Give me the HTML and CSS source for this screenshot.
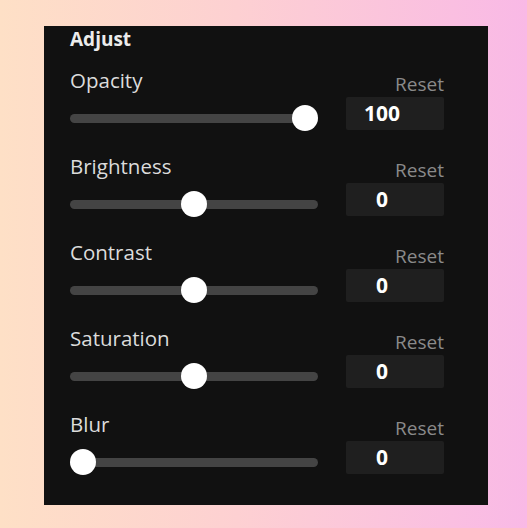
FILE: index.html
```html
<!DOCTYPE html>
<html lang="en">
<head>
<meta charset="utf-8">
<title>Adjust</title>
<link rel="stylesheet" href="styles.css">
</head>
<body>
<div class="panel">
  <div class="title">Adjust</div>
  <div class="rows">
    <div class="row">
      <div class="label">Opacity</div>
      <div class="reset">Reset</div>
      <input class="slider" type="range" min="0" max="100" value="100">
      <div class="value">100</div>
    </div>
    <div class="row">
      <div class="label">Brightness</div>
      <div class="reset">Reset</div>
      <input class="slider" type="range" min="-100" max="100" value="0">
      <div class="value">0</div>
    </div>
    <div class="row">
      <div class="label">Contrast</div>
      <div class="reset">Reset</div>
      <input class="slider" type="range" min="-100" max="100" value="0">
      <div class="value">0</div>
    </div>
    <div class="row">
      <div class="label">Saturation</div>
      <div class="reset">Reset</div>
      <input class="slider" type="range" min="-100" max="100" value="0">
      <div class="value">0</div>
    </div>
    <div class="row">
      <div class="label">Blur</div>
      <div class="reset">Reset</div>
      <input class="slider" type="range" min="0" max="100" value="0">
      <div class="value">0</div>
    </div>
  </div>
</div>
</body>
</html>
```
FILE: styles.css
```css
html, body {
  margin: 0;
  padding: 0;
}
body {
  width: 527px;
  height: 528px;
  background: linear-gradient(to right, #fee0c6 0%, #fdd0d2 45%, #f9b9e6 100%);
  font-family: "Open Sans", "Noto Sans", sans-serif;
  overflow: hidden;
  padding-top: 26px;
  box-sizing: border-box;
}
.panel {
  margin-left: 44px;
  width: 444px;
  height: 479px;
  box-sizing: border-box;
  background: #111111;
  padding: 0 44px 0 26px;
}
.title {
  font-size: 19px;
  font-weight: 700;
  line-height: 26px;
  color: #ececec;
}
.rows {
  display: flex;
  flex-direction: column;
  gap: 24px;
  margin-top: 16px;
}
.row {
  display: grid;
  grid-template-columns: 248px 98px;
  column-gap: 28px;
  grid-template-rows: 24px 33px;
  row-gap: 5px;
}
.label {
  font-size: 20.5px;
  line-height: 24px;
  color: #dcdcdc;
  align-self: end;
}
.reset {
  font-size: 19px;
  line-height: 20px;
  color: #8a8a8a;
  text-align: right;
  align-self: end;
  margin-bottom: -2px;
}
.slider {
  -webkit-appearance: none;
  appearance: none;
  margin: 8px 0 0 0;
  padding: 0;
  width: 248px;
  height: 26px;
  background: transparent;
  align-self: start;
}
.slider::-webkit-slider-runnable-track {
  height: 9px;
  border-radius: 5px;
  background: #444444;
}
.slider::-webkit-slider-thumb {
  -webkit-appearance: none;
  appearance: none;
  width: 26px;
  height: 26px;
  border-radius: 50%;
  background: #ffffff;
  border: none;
  margin-top: -8.5px;
}
.value {
  background: #1f1f1f;
  border-radius: 2px;
  height: 33px;
  box-sizing: border-box;
  padding-right: 26px;
  text-align: center;
  font-size: 21px;
  font-weight: 700;
  line-height: 33px;
  color: #ffffff;
}
```
